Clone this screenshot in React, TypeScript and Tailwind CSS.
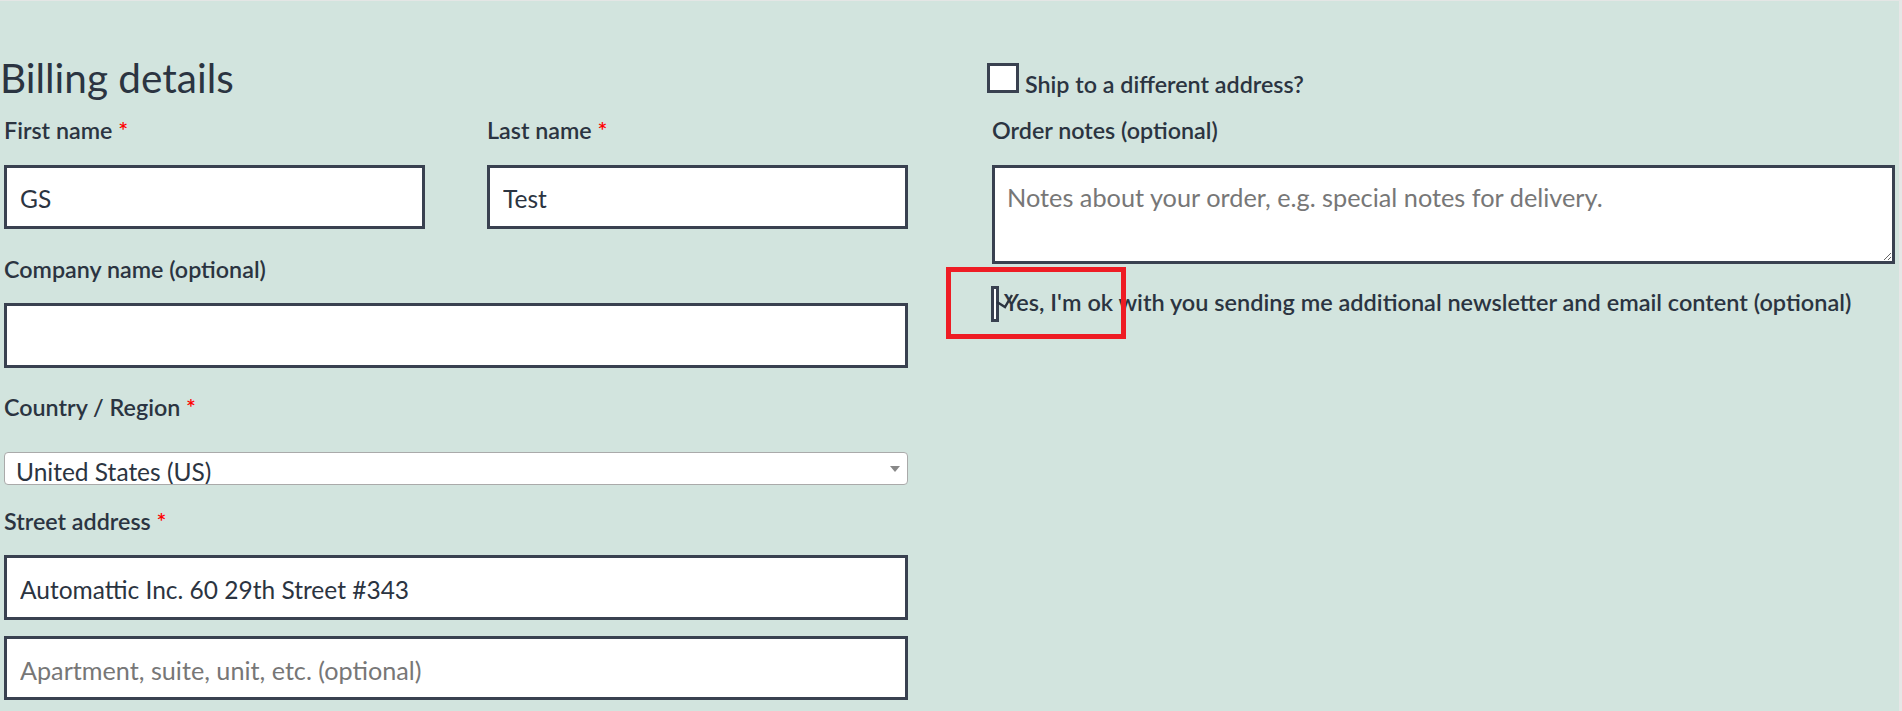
import React from "react";

const font = "font-['Lato',_'Noto_Sans',_sans-serif]";

function Req() {
  return <span className="text-[#ff0000]"> *</span>;
}

function Label({ children, className = "" }: { children: React.ReactNode; className?: string }) {
  return (
    <div className={`text-[23.3px] leading-[30px] font-semibold text-[#2b3441] whitespace-nowrap ${className}`}>{children}</div>
  );
}

function TextInput({ value, placeholder, className = "" }: { value?: string; placeholder?: string; className?: string }) {
  return (
    <input
      type="text"
      readOnly
      defaultValue={value}
      placeholder={placeholder}
      className={`block w-full border-[3px] border-[#394150] bg-white pl-[13px] pr-[13px] pt-[3px] text-[#2b3441] placeholder:text-[#777777] outline-none ${font} ${className}`}
    />
  );
}

export default function App() {
  return (
    <div className={`w-[1902px] h-[711px] overflow-hidden bg-[#d2e4de] border-t border-[#e4e6e5] border-r-[3px] border-r-[#e6e6e6] ${font} text-[#2b3441]`}>
      <div className="flex">
        {/* Left column */}
        <div className="w-[908px] shrink-0">
          <h2 className="mt-[53px] text-[40.5px] leading-[48px] font-normal text-[#2b3441]">Billing details</h2>
          <div className="ml-[4px] w-[904px]">
            <div className="grid grid-cols-2 gap-x-[62px]">
              <div>
                <Label className="mt-[13px]">
                  First name<Req />
                </Label>
                <TextInput value="GS" className="mt-[20px] h-[64px] text-[24.5px]" />
              </div>
              <div>
                <Label className="mt-[13px]">
                  Last name<Req />
                </Label>
                <TextInput value="Test" className="mt-[20px] h-[64px] text-[24.5px]" />
              </div>
            </div>
            <Label className="mt-[24.5px]">Company name (optional)</Label>
            <TextInput className="mt-[19.5px] h-[65px] text-[24.5px]" />
            <Label className="mt-[23.5px]">
              Country / Region<Req />
            </Label>
            <div className="relative mt-[30px] h-[33px] overflow-hidden rounded-[4px] border border-[#aaaaaa] bg-white">
              <div className="pl-[11px] pt-[2px] text-[24.5px] leading-[33px] text-[#2b3441] whitespace-nowrap">
                United States (US)
              </div>
              <svg className="absolute right-[7px] top-[13px]" width="10" height="6" viewBox="0 0 10 6">
                <path d="M0 0 L10 0 L5 6 Z" fill="#888888" />
              </svg>
            </div>
            <Label className="mt-[21.5px]">
              Street address<Req />
            </Label>
            <TextInput value="Automattic Inc. 60 29th Street #343" className="mt-[19px] h-[65px] text-[24.5px]" />
            <TextInput placeholder="Apartment, suite, unit, etc. (optional)" className="mt-[16px] h-[64px] text-[25.2px]" />
          </div>
        </div>

        {/* Right column */}
        <div className="ml-[84px] w-[903px] shrink-0">
          <div className="mt-[62px] flex items-start">
            <span className="-ml-[5px] block w-[32px] h-[30px] shrink-0 border-[3px] border-[#394150] bg-white" />
            <span className="ml-[6px] mt-[6px] text-[23.3px] leading-[30px] font-semibold whitespace-nowrap">
              Ship to a different address?
            </span>
          </div>
          <Label className="mt-[16px]">Order notes (optional)</Label>
          <textarea
            readOnly
            placeholder="Notes about your order, e.g. special notes for delivery."
            className={`mt-[20px] block w-[903px] h-[99px] border-[3px] border-[#394150] bg-white pl-[12px] pt-[11px] text-[25.3px] leading-[36px] text-[#2b3441] placeholder:text-[#777777] outline-none ${font}`}
          />
          <div className="relative mt-[22px] flex items-start">
            <span className="-ml-[1px] block w-[8px] h-[36px] shrink-0 border-[3px] border-[#394150] bg-white" />
            <svg className="absolute left-[4px] top-[8px]" width="18" height="16" viewBox="0 0 18 16">
              <path d="M1 8 L9 13 L16 1" fill="none" stroke="#2b3441" strokeWidth="2.4" strokeLinejoin="miter" />
            </svg>
            <span className="ml-[5px] text-[23.5px] leading-[32px] font-semibold whitespace-nowrap">
              Yes, I'm ok with you sending me additional newsletter and email content (optional)
            </span>
            <div className="pointer-events-none absolute left-[-46px] top-[-19px] w-[180px] h-[72px] border-[5px] border-[#ee1c24]" />
          </div>
        </div>
      </div>
    </div>
  );
}
